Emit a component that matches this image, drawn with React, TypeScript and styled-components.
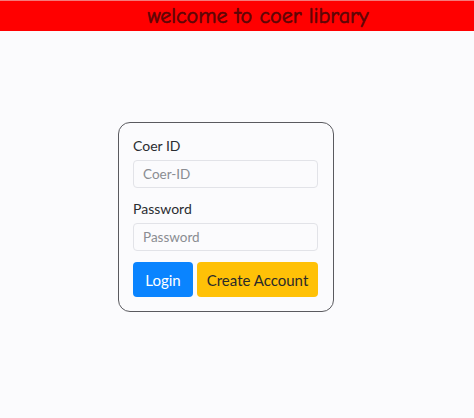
import React from "react";
import styled, { createGlobalStyle } from "styled-components";

const Global = createGlobalStyle`
  html, body { margin: 0; padding: 0; background: #fbfbfd; }
  body { font-family: "Lato", "Noto Sans", sans-serif; }
  * { box-sizing: border-box; }
`;

const Page = styled.div`
  width: 474px;
  min-height: 418px;
  background: #fbfbfd;
  border-top: 1px solid #f47a7a;
`;

const Header = styled.header`
  height: 30px;
  background: #ff0000;
  display: flex;
  align-items: center;
  justify-content: center;
  padding-left: 42px;
  color: #5c0606;
  font-family: "Comic Sans MS", "Comic Neue", cursive;
  font-size: 22px;
  line-height: 30px;
  -webkit-text-stroke: 0.6px #5c0606;
`;

const Main = styled.main`
  display: flex;
  padding-top: 91px;
  padding-left: 118px;
`;

const Card = styled.form`
  width: 216px;
  border: 1px solid #5a5a5f;
  border-radius: 12px;
  padding: 14px 15px 14px 14px;
  display: flex;
  flex-direction: column;
`;

const Label = styled.label<{ $top?: number }>`
  font-size: 14px;
  line-height: 18px;
  color: #2a2d31;
  margin-top: ${(p) => p.$top ?? 0}px;
  margin-bottom: 5px;
  display: block;
`;

const Input = styled.input`
  height: 28px;
  width: 100%;
  border: 1px solid #e2e3e8;
  border-radius: 4px;
  background: #fbfbfd;
  padding: 0 9px;
  font-family: inherit;
  font-size: 13.5px;
  color: #212529;
  &::placeholder { color: #8a8d92; }
`;

const Buttons = styled.div`
  display: flex;
  gap: 4px;
  margin-top: 11px;
`;

const Button = styled.button<{ $variant: "primary" | "warning" }>`
  height: 35px;
  border: none;
  border-radius: 4px;
  padding: 0;
  white-space: nowrap;
  font-family: inherit;
  font-size: 15px;
  background: ${(p) => (p.$variant === "primary" ? "#0a84ff" : "#ffc107")};
  color: ${(p) => (p.$variant === "primary" ? "#ffffff" : "#2a2a2a")};
  flex: ${(p) => (p.$variant === "primary" ? "0 0 60px" : "1")};
`;

export default function App() {
  return (
    <>
      <Global />
      <Page>
        <Header>welcome to coer library</Header>
        <Main>
          <Card onSubmit={(e) => e.preventDefault()}>
            <Label>Coer ID</Label>
            <Input placeholder="Coer-ID" />
            <Label $top={12}>Password</Label>
            <Input type="password" placeholder="Password" />
            <Buttons>
              <Button $variant="primary">Login</Button>
              <Button $variant="warning">Create Account</Button>
            </Buttons>
          </Card>
        </Main>
      </Page>
    </>
  );
}
